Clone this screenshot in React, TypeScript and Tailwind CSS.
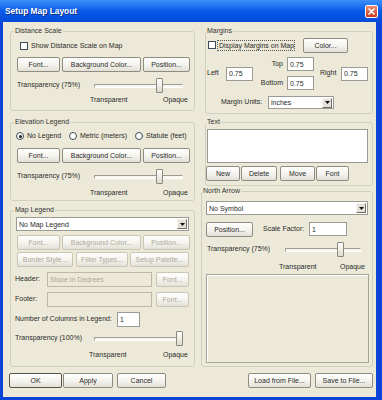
import React from 'react'

type Kids = { children?: React.ReactNode }

function Btn({ label, className = '', disabled = false, strong = false }: { label: string; className?: string; disabled?: boolean; strong?: boolean }) {
  const edge = disabled
    ? 'border-[#c9c6b6] text-[#aca899]'
    : strong
      ? 'border-[#55534c] text-[#2a2a2a]'
      : 'border-[#8e8c83] text-[#2a2a2a]'
  return (
    <button
      type="button"
      className={`flex h-[15px] shrink-0 items-center justify-center whitespace-nowrap rounded-[2px] border bg-linear-to-b from-[#fefefd] via-[#f5f4ef] to-[#e3e1d6] leading-none ${edge} ${className}`}
    >
      {label}
    </button>
  )
}

function Group({ title, className = '', labelClass = 'left-[3px]', children }: Kids & { title: string; className?: string; labelClass?: string }) {
  return (
    <div className={`relative flex shrink-0 flex-col rounded-[3px] border border-[#d0d0bf] ${className}`}>
      <span className={`absolute -top-[6px] whitespace-nowrap bg-[#ece9d8] px-[1px] leading-[10px] text-[#333] ${labelClass}`}>{title}</span>
      {children}
    </div>
  )
}

function Check() {
  return <span className="h-[8px] w-[8px] shrink-0 border border-[#3d4b5c] bg-white" />
}

function Radio({ on = false }: { on?: boolean }) {
  return (
    <span className="flex h-[8px] w-[8px] shrink-0 items-center justify-center rounded-full border border-[#3d4b5c] bg-white">
      {on && <span className="h-[3px] w-[3px] rounded-full bg-[#1a1a1a]" />}
    </span>
  )
}

function Field({ value = '', className = '', disabled = false }: { value?: string; className?: string; disabled?: boolean }) {
  return (
    <input
      readOnly
      value={value}
      className={`h-[14px] shrink-0 border px-[2px] leading-none outline-none ${disabled ? 'border-[#bcb9a9] bg-[#ece9d8] text-[#aca899]' : 'border-[#9c9a94] bg-white text-[#2a2a2a]'} ${className}`}
    />
  )
}

function Select({ value, className = '' }: { value: string; className?: string }) {
  return (
    <div className={`flex shrink-0 items-center justify-between border border-[#9c9a94] bg-white pl-[2px] pr-[1px] ${className}`}>
      <span className="leading-none text-[#2a2a2a]">{value}</span>
      <span className="flex h-[10px] w-[10px] items-center justify-center border border-t-[#f4f3ee] border-l-[#f4f3ee] border-r-[#6f6e69] border-b-[#6f6e69] bg-[#e4e2d8]">
        <svg width="5" height="3" viewBox="0 0 5 3">
          <polygon points="0,0 5,0 2.5,3" fill="#111" />
        </svg>
      </span>
    </div>
  )
}

function Slider({ className, thumbClass }: { className: string; thumbClass: string }) {
  return (
    <div className={`relative flex h-[15px] shrink-0 items-center ${className}`}>
      <div className="h-[4px] w-full border border-t-[#9d9b94] border-l-[#9d9b94] border-r-white border-b-white bg-[#f7f6f1]" />
      <div className={`absolute top-0 h-[15px] w-[7px] rounded-[1px] border border-[#8a887f] bg-linear-to-b from-white to-[#dedcd0] ${thumbClass}`} />
    </div>
  )
}

function Ends({ className, gap }: { className: string; gap: string }) {
  return (
    <div className={`flex h-[10px] items-center leading-[10px] ${className}`}>
      <span className={`shrink-0 ${gap}`}>Transparent</span>
      <span>Opaque</span>
    </div>
  )
}

function FontRow({ disabled = false, className = '' }: { disabled?: boolean; className?: string }) {
  return (
    <div className={`flex pl-[6px] ${className}`}>
      <Btn label="Font..." className="w-[43px]" disabled={disabled} />
      <Btn label="Background Color..." className="ml-[2px] w-[79px]" disabled={disabled} />
      <Btn label="Position..." className="ml-[2px] w-[47px]" disabled={disabled} />
    </div>
  )
}

export default function App() {
  return (
    <div className="flex h-[400px] w-[382px] flex-col bg-[#0b44d8] font-['Liberation_Sans',Arial,sans-serif] text-[7px] text-[#2a2a2a]">
      {/* title bar */}
      <div className="flex h-[22px] shrink-0 items-center justify-between bg-linear-to-b from-[#3d8ffa] via-[#0a5aea] to-[#044bd8] pl-[5px] pr-[4px]">
        <span className="text-[8.4px] font-bold text-white [text-shadow:1px_1px_0_#0a2f8f]">Setup Map Layout</span>
        <span className="flex h-[13px] w-[13px] items-center justify-center rounded-[2px] border border-white bg-linear-to-b from-[#ec8a70] to-[#c63a18]">
          <svg width="7" height="7" viewBox="0 0 7 7">
            <path d="M1 1 L6 6 M6 1 L1 6" stroke="#fff" strokeWidth="1.6" strokeLinecap="round" />
          </svg>
        </span>
      </div>

      {/* dialog body */}
      <div className="mb-[3px] ml-[3px] mr-[6px] flex flex-1 flex-col bg-[#ece9d8] pl-[7px] pr-[3px] pt-[9px]">
        <div className="flex">
          {/* left column */}
          <div className="flex w-[185px] shrink-0 flex-col">
            <Group title="Distance Scale" className="h-[80px]">
              <div className="mt-[9px] flex h-[10px] items-center pl-[9px]">
                <Check />
                <span className="ml-[3px]">Show Distance Scale on Map</span>
              </div>
              <FontRow className="mt-[6px]" />
              <div className="mt-[6px] flex h-[15px] items-center pl-[6px]">
                <span className="w-[77px] shrink-0">Transparency (75%)</span>
                <Slider className="w-[89px]" thumbClass="left-[62px]" />
              </div>
              <Ends className="mt-[2px] pl-[79px]" gap="w-[73px]" />
            </Group>

            <Group title="Elevation Legend" className="mt-[11px] h-[79px]">
              <div className="mt-[8px] flex h-[10px] items-center pl-[5px]">
                <span className="flex w-[53px] shrink-0 items-center">
                  <Radio on />
                  <span className="ml-[3px]">No Legend</span>
                </span>
                <span className="flex w-[66px] shrink-0 items-center">
                  <Radio />
                  <span className="ml-[3px]">Metric (meters)</span>
                </span>
                <span className="flex items-center">
                  <Radio />
                  <span className="ml-[3px]">Statute (feet)</span>
                </span>
              </div>
              <FontRow className="mt-[7px]" />
              <div className="mt-[6px] flex h-[15px] items-center pl-[6px]">
                <span className="w-[77px] shrink-0">Transparency (75%)</span>
                <Slider className="w-[89px]" thumbClass="left-[62px]" />
              </div>
              <Ends className="mt-[4px] pl-[79px]" gap="w-[73px]" />
            </Group>

            <Group title="Map Legend" className="mt-[9px] h-[157px]">
              <div className="mt-[6px] pl-[5px]">
                <Select value="No Map Legend" className="h-[14px] w-[173px]" />
              </div>
              <FontRow className="mt-[4px]" disabled />
              <div className="mt-[2px] flex pl-[6px]">
                <Btn label="Border Style..." className="w-[56px]" disabled />
                <Btn label="Filter Types..." className="ml-[3px] w-[52px]" disabled />
                <Btn label="Setup Palette..." className="ml-[2px] w-[59px]" disabled />
              </div>
              <div className="mt-[5px] flex h-[15px] items-center pl-[4px]">
                <span className="w-[32px] shrink-0">Header:</span>
                <Field value="Slope in Degrees" disabled className="h-[15px] w-[105px]" />
                <Btn label="Font..." className="ml-[4px] w-[33px]" disabled />
              </div>
              <div className="mt-[5px] flex h-[15px] items-center pl-[4px]">
                <span className="w-[32px] shrink-0">Footer:</span>
                <Field disabled className="h-[15px] w-[105px]" />
                <Btn label="Font..." className="ml-[4px] w-[33px]" disabled />
              </div>
              <div className="mt-[5px] flex h-[15px] items-center pl-[4px]">
                <span className="w-[102px] shrink-0">Number of Columns in Legend:</span>
                <Field value="1" className="h-[15px] w-[23px]" />
              </div>
              <div className="mt-[4px] flex h-[15px] items-center pl-[4px]">
                <span className="w-[79px] shrink-0">Transparency (100%)</span>
                <Slider className="w-[89px]" thumbClass="left-[82px]" />
              </div>
              <Ends className="mt-[4px] pl-[78px]" gap="w-[74px]" />
            </Group>
          </div>

          {/* right column */}
          <div className="ml-[6px] flex w-[172px] shrink-0 flex-col">
            <Group title="Margins" className="ml-[4px] h-[83px] w-[168px]" labelClass="left-0">
              <div className="mt-[6px] flex h-[14px] items-center pl-[2px]">
                <Check />
                <span className="ml-[2px] w-[76px] shrink-0 whitespace-nowrap px-[1px] leading-[9px] outline-1 outline-dotted outline-[#555]">Display Margins on Map</span>
                <Btn label="Color..." className="ml-[9px] h-[14px] w-[45px]" />
              </div>
              <div className="mt-[5px] flex h-[33px] items-center pl-[1px]">
                <span className="w-[19px] shrink-0">Left</span>
                <Field value="0.75" className="w-[27px]" />
                <div className="flex w-[61px] shrink-0 flex-col gap-[5px]">
                  <div className="flex items-center">
                    <span className="w-[34px] shrink-0 pr-[4px] text-right">Top</span>
                    <Field value="0.75" className="w-[27px]" />
                  </div>
                  <div className="flex items-center">
                    <span className="w-[34px] shrink-0 pr-[4px] text-right">Bottom</span>
                    <Field value="0.75" className="w-[27px]" />
                  </div>
                </div>
                <span className="ml-[6px] w-[21px] shrink-0">Right</span>
                <Field value="0.75" className="w-[27px]" />
              </div>
              <div className="mt-[6px] flex h-[13px] items-center pl-[15px]">
                <span className="w-[47px] shrink-0">Margin Units:</span>
                <Select value="inches" className="h-[13px] w-[66px]" />
              </div>
            </Group>

            <Group title="Text" className="ml-[4px] mt-[8px] h-[64px] w-[168px]" labelClass="left-0">
              <div className="ml-[1px] mt-[6px] h-[34px] w-[161px] border border-[#9c9a94] bg-white" />
              <div className="mt-[3px] flex">
                <Btn label="New" className="w-[34px]" />
                <Btn label="Delete" className="ml-[1px] w-[36px]" />
                <Btn label="Move" className="ml-[3px] w-[35px]" />
                <Btn label="Font" className="ml-[1px] w-[33px]" />
              </div>
            </Group>

            <Group title="North Arrow" className="mt-[5px] h-[176px] w-[172px]" labelClass="left-0">
              <div className="ml-[4px] mt-[9px]">
                <Select value="No Symbol" className="h-[14px] w-[162px]" />
              </div>
              <div className="ml-[4px] mt-[7px] flex h-[14px] items-center">
                <Btn label="Position..." className="h-[14px] w-[47px]" />
                <span className="ml-[10px] w-[46px] shrink-0">Scale Factor:</span>
                <Field value="1" className="w-[38px]" />
              </div>
              <div className="mt-[6px] flex h-[15px] items-center pl-[5px]">
                <span className="w-[78px] shrink-0">Transparency (75%)</span>
                <Slider className="w-[76px]" thumbClass="left-[52px]" />
              </div>
              <Ends className="mt-[5px] pl-[77px]" gap="w-[61px]" />
              <div className="ml-[4px] mt-[2px] h-[89px] w-[163px] border border-[#a6a495] shadow-[inset_1px_1px_0_#fff]" />
            </Group>
          </div>
        </div>

        {/* dialog buttons */}
        <div className="mt-[6px] flex">
          <Btn label="OK" strong className="-ml-[1px] w-[53px]" />
          <Btn label="Apply" className="ml-[1px] w-[50px]" />
          <Btn label="Cancel" className="ml-[4px] w-[49px]" />
          <Btn label="Load from File..." className="ml-auto w-[63px]" />
          <Btn label="Save to File..." className="ml-[4px] w-[58px]" />
        </div>
      </div>
    </div>
  )
}
